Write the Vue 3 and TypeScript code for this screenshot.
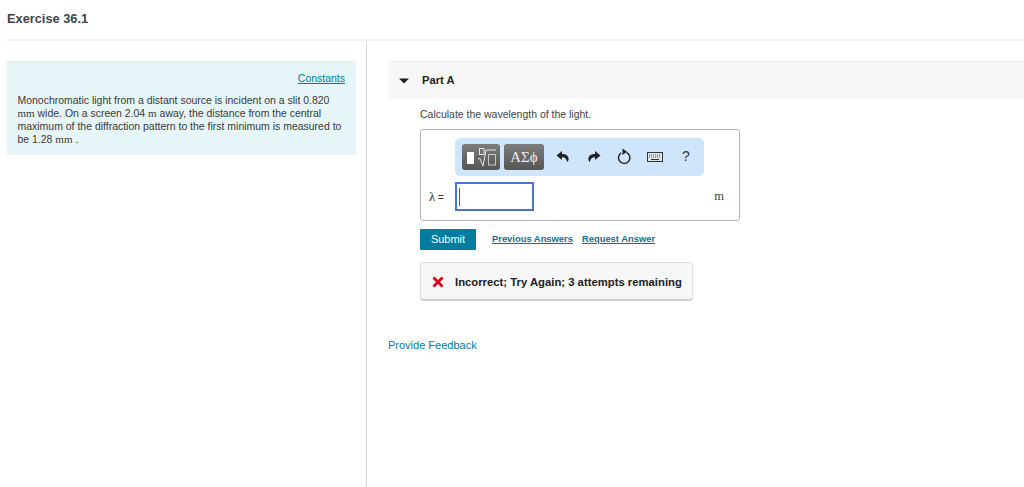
<script setup lang="ts">
const title = 'Exercise 36.1'
</script>

<template>
  <div class="page">
    <header class="head">{{ title }}</header>
    <div class="cols">
      <aside class="left">
        <div class="intro">
          <div class="const"><a>Constants</a></div>
          <p class="prob">Monochromatic light from a distant source is incident on a slit 0.820<br><span class="m">mm</span> wide. On a screen 2.04 <span class="m">m</span> away, the distance from the central<br>maximum of the diffraction pattern to the first minimum is measured to<br>be 1.28 <span class="m">mm</span> .</p>
        </div>
      </aside>
      <main class="right">
        <div class="part">
          <svg class="caret" width="10" height="6" viewBox="0 0 10 6"><path d="M0 0.5H10L5 5.5Z" fill="#222" /></svg>
          <span class="part-name">Part A</span>
        </div>
        <div class="body">
          <p class="q">Calculate the wavelength of the light.</p>
          <div class="answer">
            <div class="toolbar">
              <div class="tbtn tmpl">
                <svg width="38" height="26" viewBox="0 0 38 26" fill="none">
                  <rect x="5" y="8" width="7" height="12" fill="#fff" />
                  <rect x="17.500" y="4.500" width="4.500" height="6" stroke="#e4e4e4" stroke-width="1" />
                  <path d="M16 15l2-.5 3 7.500 3-16h10" stroke="#e4e4e4" stroke-width="1" />
                  <rect x="26.500" y="10.500" width="7" height="10.500" stroke="#c8c8c8" stroke-width="1" />
                </svg>
              </div>
              <div class="tbtn sym">ΑΣϕ</div>
              <svg class="ic undo" width="14" height="13" viewBox="0 0 14 13"><path d="M6 1L0.5 5.5 6 10V7.200c2.600 0 4.200 1 5.200 4.800 1.200-1 1.600-2.400 1.400-3.800C12.200 5.400 9.500 3.900 6 3.900Z" fill="#222" /></svg>
              <svg class="ic redo" width="14" height="13" viewBox="0 0 14 13"><path d="M8 1l5.500 4.500L8 10V7.200c-2.600 0-4.200 1-5.200 4.800C1.600 11 1.200 9.600 1.400 8.200 1.800 5.400 4.500 3.900 8 3.900Z" fill="#222" /></svg>
              <svg class="ic reset" width="14" height="17" viewBox="0 0 14 17" fill="none"><path d="M4.300 4.800A5.700 5.700 0 1 0 9.500 4.500" stroke="#222" stroke-width="1.400" /><path d="M5.500 0.500v6.500L10 3.700Z" fill="#222" /></svg>
              <svg class="ic kbd" width="16" height="10" viewBox="0 0 16 10" fill="none"><rect x="0.500" y="0.500" width="15" height="9" fill="#dfe6ee" stroke="#333" /><path d="M2 3h12M2 5h12" stroke="#555" stroke-dasharray="1 1" /><path d="M4 7.500h8" stroke="#333" /></svg>
              <span class="help">?</span>
            </div>
            <div class="row">
              <span class="lam"><i class="lsym">λ</i> =</span>
              <div class="input"><span class="cursor"></span></div>
              <span class="unit m">m</span>
            </div>
          </div>
          <div class="actions">
            <button class="submit">Submit</button>
            <a class="act first">Previous Answers</a>
            <a class="act">Request Answer</a>
          </div>
          <div class="feedback">
            <svg width="12" height="12" viewBox="0 0 12 12"><path d="M2.500 0.500L6 4 9.500 0.500 11.500 2.500 8 6l3.500 3.500-2 2L6 8l-3.500 3.500-2-2L4 6 0.500 2.500Z" fill="#d6001c" /></svg>
            <span>Incorrect; Try Again; 3 attempts remaining</span>
          </div>
        </div>
        <a class="provide">Provide Feedback</a>
      </main>
    </div>
  </div>
</template>

<style>
html, body { margin: 0; background: #fff; }
</style>

<style scoped>
.page {
  width: 1024px;
  height: 487px;
  overflow: hidden;
  font-family: "Liberation Sans", Arial, sans-serif;
  color: #333;
  box-sizing: border-box;
  padding-left: 7px;
}
.head {
  box-sizing: border-box;
  padding-top: 11px;
  font-size: 12.800px;
  line-height: 15px;
  font-weight: bold;
  color: #444;
  border-bottom: 2px solid #efefef;
  height: 41px;
}
.cols { display: flex; height: 446px; }
.left {
  width: 359px;
  flex: none;
  border-right: 1px solid #d9d9d9;
  padding-top: 20px;
}
.intro {
  width: 349px;
  height: 94px;
  box-sizing: border-box;
  background: #e6f5f7;
  border-top: 1px solid #e6eced;
  padding: 10px 11px 0 10.500px;
  font-size: 10.470px;
  line-height: 13px;
}
.const { text-align: right; height: 22px; color: #007c9f; }
.const a { text-decoration: underline; }
.prob { margin: 0; color: #3a3a3a; }
.m { font-family: "Liberation Serif", serif; font-size: 11px; }
.right { flex: 1; padding: 20px 0 0 21px; min-width: 0; }
.part {
  height: 38px;
  background: #f7f7f7;
  border-top: 1px solid #eee;
  box-sizing: border-box;
  display: flex;
  align-items: center;
  font-size: 11.200px;
  font-weight: bold;
  color: #222;
  padding-left: 11px;
}
.part-name { margin-bottom: 2px; }
.caret { margin-right: 13px; }
.body { padding-left: 32px; }
.q { margin: 9px 0 0; font-size: 10.470px; line-height: 13px; color: #444; }
.answer {
  margin-top: 8px;
  width: 320px;
  height: 92px;
  box-sizing: border-box;
  border: 1px solid #b5b5b5;
  border-radius: 3px;
  padding: 8px 0 0 34px;
}
.toolbar {
  width: 249px;
  height: 38px;
  background: #cfe5fc;
  border-radius: 5px;
  box-sizing: border-box;
  padding-left: 7px;
  display: flex;
  align-items: center;
}
.tbtn {
  height: 26px;
  width: 38px;
  border-radius: 3px;
  background: linear-gradient(#7c7c7c, #555);
  color: #eee;
  display: flex;
  align-items: center;
  justify-content: center;
  box-sizing: border-box;
  flex: none;
}
.sym {
  width: 40px;
  margin-left: 4px;
  font-family: "Liberation Serif", serif;
  font-size: 15px;
}
.ic { flex: none; margin-bottom: 2px; }
.undo { margin-left: 12px; }
.redo { margin-left: 17px; }
.reset { margin-left: 16px; }
.kbd { margin-left: 16px; margin-bottom: 0; }
.help { margin-left: 19px; margin-bottom: 2px; font-size: 14px; color: #333; }
.row { display: flex; align-items: center; margin-top: 6px; position: relative; }
.lam { position: absolute; left: -26px; font-size: 10px; color: #333; }
.lsym { font-family: "Liberation Serif", serif; font-size: 13px; font-style: normal; }
.input {
  width: 79px;
  height: 29px;
  box-sizing: border-box;
  border: 2px solid #4a74c9;
  display: flex;
  align-items: center;
  padding-left: 2px;
}
.cursor { width: 1px; height: 18px; background: #3a5aa8; }
.unit { position: absolute; right: 15px; top: 7px; font-size: 12.500px; color: #444; }
.actions { display: flex; align-items: center; margin-top: 8px; height: 21px; }
.submit {
  width: 56px;
  height: 21px;
  background: #007c9f;
  color: #fff;
  border: 0;
  border-radius: 1px;
  font: 11px "Liberation Sans", Arial, sans-serif;
  padding: 0 0 1px;
}
.act {
  font-size: 9.400px;
  font-weight: bold;
  color: #14708f;
  text-decoration: underline;
  margin-left: 9px;
  margin-bottom: 3px;
}
.act.first { margin-left: 16px; }
.feedback {
  margin-top: 12px;
  width: 273px;
  height: 38px;
  box-sizing: border-box;
  background: #f7f7f7;
  border: 1px solid #ddd;
  border-bottom-color: #ccc;
  border-radius: 4px;
  box-shadow: 0 1px 1px #ccc;
  display: flex;
  align-items: center;
  padding: 2px 0 0 11px;
  font-size: 11.300px;
  font-weight: bold;
  color: #222;
  gap: 11px;
}
.provide {
  display: block;
  margin-top: 39px;
  font-size: 11px;
  line-height: 13px;
  color: #007c9f;
}
</style>
